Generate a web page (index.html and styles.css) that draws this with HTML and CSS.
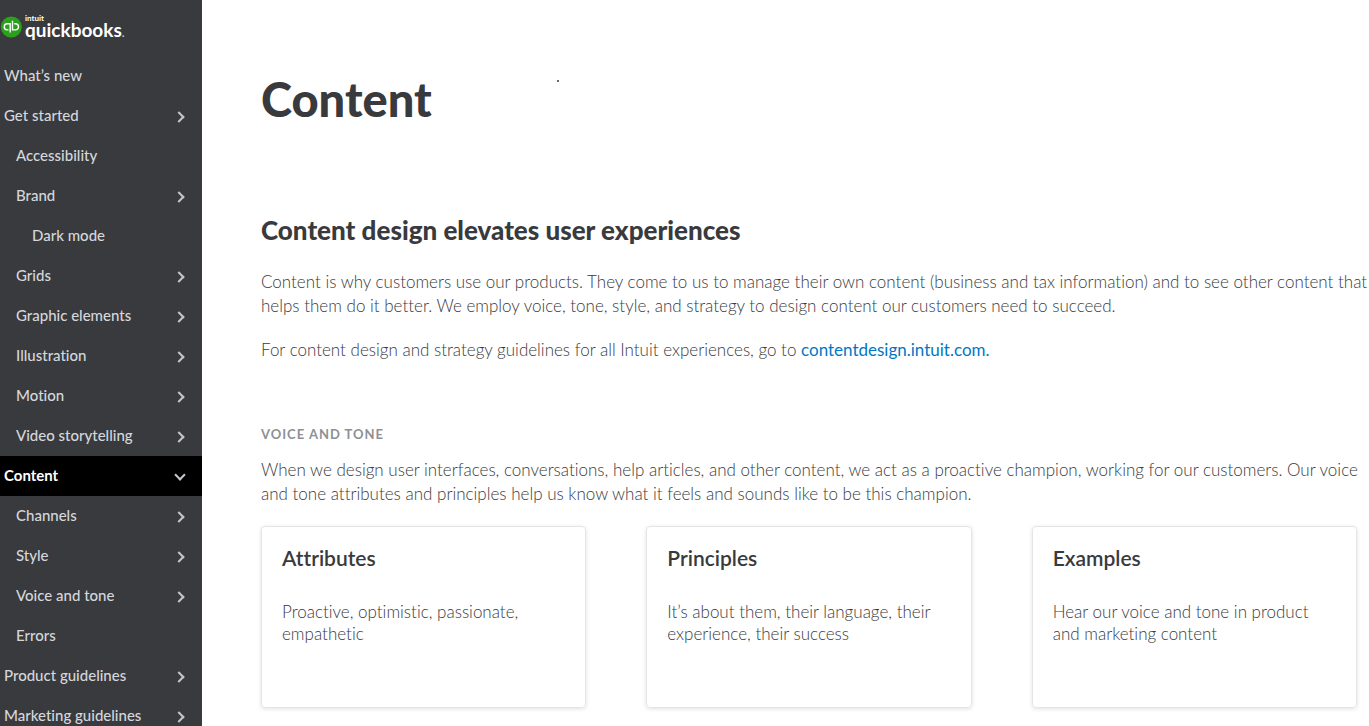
FILE: index.html
```html
<!DOCTYPE html>
<html lang="en">
<head>
    <meta charset="UTF-8">
    <meta name="viewport" content="width=device-width, initial-scale=1.0">
    <title>Content</title>
    <link rel="stylesheet" href="styles.css">
</head>
<body>
    <div class="page">
        <aside class="sidebar">
            <a class="logo" href="#">
                <svg class="logo-mark" width="22" height="22" viewBox="0 0 22 22" aria-hidden="true">
                    <circle cx="11.3" cy="11" r="10.5" fill="#2ca01c"/>
                    <g fill="none" stroke="#fff" stroke-width="1.4">
                        <path d="M10.2 16.5V7.7H7.3a3.1 3.1 0 0 0 0 6.2h1.2"/>
                        <path d="M12.5 4.8v9.1h2.9a3.1 3.1 0 0 0 0-6.2h-1.2"/>
                    </g>
                </svg>
                <span class="logo-text">
                    <span class="logo-intuit">intuit</span>
                    <span class="logo-name">quickbooks<span class="logo-dot">.</span></span>
                </span>
            </a>
            <nav class="nav">
                <a class="nav-link" href="#">What’s new</a>
                <a class="nav-link has-arrow" href="#">Get started</a>
                <a class="nav-link level-2" href="#">Accessibility</a>
                <a class="nav-link level-2 has-arrow" href="#">Brand</a>
                <a class="nav-link level-3" href="#">Dark mode</a>
                <a class="nav-link level-2 has-arrow" href="#">Grids</a>
                <a class="nav-link level-2 has-arrow" href="#">Graphic elements</a>
                <a class="nav-link level-2 has-arrow" href="#">Illustration</a>
                <a class="nav-link level-2 has-arrow" href="#">Motion</a>
                <a class="nav-link level-2 has-arrow" href="#">Video storytelling</a>
                <a class="nav-link has-arrow active" href="#">Content</a>
                <a class="nav-link level-2 has-arrow" href="#">Channels</a>
                <a class="nav-link level-2 has-arrow" href="#">Style</a>
                <a class="nav-link level-2 has-arrow" href="#">Voice and tone</a>
                <a class="nav-link level-2" href="#">Errors</a>
                <a class="nav-link has-arrow" href="#">Product guidelines</a>
                <a class="nav-link has-arrow" href="#">Marketing guidelines</a>
            </nav>
        </aside>

        <main class="content">
            <h1>Content</h1>

            <section class="intro">
                <h2>Content design elevates user experiences</h2>
                <p>Content is why customers use our products. They come to us to manage their own content (business and tax information) and to see other content that helps them do it better. We employ voice, tone, style, and strategy to design content our customers need to succeed.</p>
                <p>For content design and strategy guidelines for all Intuit experiences, go to <a href="#">contentdesign.intuit.com.</a></p>
            </section>

            <section class="voice">
                <h3>Voice and tone</h3>
                <p>When we design user interfaces, conversations, help articles, and other content, we act as a proactive champion, working for our customers. Our voice and&nbsp;tone attributes and principles help us know what it feels and sounds like to be this champion.</p>
                <div class="cards">
                    <a class="card" href="#">
                        <h4>Attributes</h4>
                        <p>Proactive, optimistic, passionate, empathetic</p>
                    </a>
                    <a class="card" href="#">
                        <h4>Principles</h4>
                        <p>It’s about them, their language, their experience, their success</p>
                    </a>
                    <a class="card" href="#">
                        <h4>Examples</h4>
                        <p>Hear our voice and tone in product and&nbsp;marketing content</p>
                    </a>
                </div>
            </section>
        </main>
    </div>
</body>
</html>
```

FILE: styles.css
```css
*, *::after {
    box-sizing: border-box;
}
body {
    margin: 0;
    background: #fff;
    color: #393a3d;
    font-family: Lato, "Open Sans", sans-serif;
    font-size: 17px;
    font-weight: 300;
    font-variant-ligatures: none;
    line-height: 24px;
}
h1, h2, h3, h4, p {
    margin: 0;
}
.page {
    display: flex;
    align-items: flex-start;
}

/* Sidebar */
.sidebar {
    position: sticky;
    top: 0;
    flex: 0 0 202px;
    height: 100vh;
    overflow: hidden;
    background: #393a3d;
}
.logo {
    display: flex;
    gap: 3px;
    height: 56px;
    padding-top: 16px;
    color: #fff;
    text-decoration: none;
}
.logo-text {
    display: flex;
    flex-direction: column;
    font-weight: bold;
}
.logo-intuit {
    font-size: 8px;
    line-height: 4px;
}
.logo-name {
    font-size: 19px;
    line-height: 20px;
}
.logo-dot {
    font-size: 12px;
    color: #babec5;
}
.nav-link {
    display: flex;
    align-items: center;
    justify-content: space-between;
    height: 40px;
    padding: 0 19px 3px 4px;
    color: #d4d7dc;
    font-size: 15px;
    font-weight: 500;
    text-decoration: none;
}
.level-2 {
    padding-left: 16px;
}
.level-3 {
    padding-left: 32px;
}
.has-arrow::after {
    content: "";
    width: 8px;
    height: 8px;
    margin-top: 4px;
    border: solid #c4c7cc;
    border-width: 2px 2px 0 0;
    transform: rotate(45deg);
}
.nav-link.active {
    background: #000;
    color: #fff;
    font-weight: bold;
}
.nav-link.active::after {
    margin-top: 0;
    margin-right: -1px;
    transform: rotate(135deg);
}

/* Main column */
.content {
    flex: 1;
    min-width: 0;
    padding: 71px 0 16px 59px;
}
h1 {
    position: relative;
    font-size: 47px;
    font-weight: 900;
    line-height: 56px;
}
h1::after {
    content: "";
    position: absolute;
    top: 9px;
    left: 296px;
    width: 2px;
    height: 2px;
    border-radius: 1px;
    background: #393a3d;
}
.intro {
    margin-top: 87px;
}
h2 {
    font-size: 26px;
    font-weight: 900;
    line-height: 32px;
    margin-bottom: 24px;
}
.intro p + p {
    margin-top: 20px;
}
.intro a {
    color: #0077c5;
    font-weight: 400;
    text-decoration: none;
}
.voice {
    margin-top: 60px;
}
h3 {
    color: #8d9096;
    font-size: 13px;
    font-weight: bold;
    line-height: 24px;
    letter-spacing: 1px;
    text-transform: uppercase;
    margin-bottom: 12px;
}
.cards {
    display: grid;
    grid-template-columns: repeat(3, 1fr);
    gap: 60px;
    margin: 20px 12px 0 0;
}
.card {
    min-height: 182px;
    padding: 19px 20px;
    border: 1px solid #e3e5e8;
    border-radius: 4px;
    box-shadow: 0 1px 4px rgba(0, 0, 0, 0.12);
    color: #393a3d;
    text-decoration: none;
}
h4 {
    font-size: 21px;
    font-weight: 600;
    line-height: 24px;
    margin-bottom: 31px;
}
.card p {
    line-height: 22px;
}
```
